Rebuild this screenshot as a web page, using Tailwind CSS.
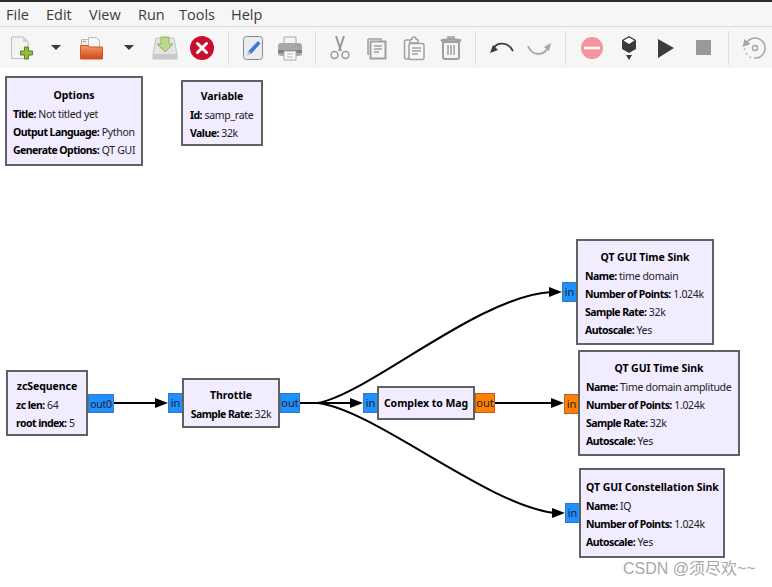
<!DOCTYPE html>
<html lang="en">
<head>
<meta charset="UTF-8">
<title>GNU Radio Companion</title>
<script src="https://cdn.jsdelivr.net/npm/@tailwindcss/browser@4"></script>
</head>
<body class="w-[772px] h-[587px] overflow-hidden bg-white font-['Noto_Sans',sans-serif] text-black">

<!-- Menu bar -->
<div class="h-[2px] bg-[#2c2c2c]"></div>
<nav class="h-[25px] flex items-center pl-[6px] pt-[2px] bg-[#f6f6f6] border-b border-[#dcdcdc] text-[14.5px] text-[#3c3c3c] font-['Open_Sans',sans-serif]">
  <span class="w-[40px]">File</span><span class="w-[43px]">Edit</span><span class="w-[49px]">View</span><span class="w-[41px]">Run</span><span class="w-[52px]">Tools</span><span>Help</span>
</nav>

<!-- Toolbar -->
<div class="h-[41px] flex items-center bg-[#f6f6f6] pl-[3px]">
  <div class="w-[36px] flex justify-center">
    <svg width="28" height="28" viewBox="0 0 28 28"><path d="M4.500 3h12l4.500 4.500V24.500H4.500z" fill="#f3f3f3" stroke="#bdbdbd"/><path d="M16 3v5h5z" fill="#cfcfcf"/><path d="M17.500 14.500h4v4h4v4h-4v4h-4v-4h-4v-4h4z" transform="translate(0 -1.500)" fill="#93bd3c" stroke="#5f7f22"/></svg>
  </div>
  <div class="w-[34px] flex justify-center"><div class="w-0 h-0 border-x-[5px] border-x-transparent border-t-[5px] border-t-[#3a3a3a]"></div></div>
  <div class="w-[39px] flex justify-center">
    <svg width="28" height="28" viewBox="0 0 28 28"><defs><linearGradient id="fo" x1="0" y1="0" x2="0" y2="1"><stop offset="0" stop-color="#f59a63"/><stop offset="1" stop-color="#d5461a"/></linearGradient></defs><path d="M3.500 5.500h13l3 3v6h-16z" fill="#f2f2f2" stroke="#bcbcbc"/><path d="M10.500 3.500h8l3 3v8h-11z" fill="#f7f7f7" stroke="#bcbcbc"/><path d="M5 7h3v1H5z" fill="#e08a4a"/><path d="M2.500 11.500h8l1 1.500h13v12h-22z" fill="url(#fo)" stroke="#c9572b"/></svg>
  </div>
  <div class="w-[34px] flex justify-center"><div class="w-0 h-0 border-x-[5px] border-x-transparent border-t-[5px] border-t-[#3a3a3a]"></div></div>
  <div class="w-[38px] flex justify-center">
    <svg width="28" height="28" viewBox="0 0 28 28"><path d="M5 4h18l3 16v5H2v-5z" fill="#e4e4e4" stroke="#c4c4c4"/><path d="M2 20h24v5H2z" fill="#c9c9c9"/><path d="M10 3h8v7h4l-8 8-8-8h4z" fill="#b9d98e" stroke="#8fb35f"/></svg>
  </div>
  <div class="w-[37px] flex justify-center">
    <svg width="26" height="26" viewBox="0 0 26 26"><circle cx="13" cy="13" r="12" fill="#c6102e"/><path d="M8.500 8.500l9 9M17.500 8.500l-9 9" stroke="#fff" stroke-width="3" stroke-linecap="round"/></svg>
  </div>
  <div class="w-px h-[34px] bg-[#dcdcdc] ml-[7px] mr-[6px]"></div>
  <div class="w-[37px] flex justify-center">
    <svg width="28" height="28" viewBox="0 0 28 28"><rect x="4.500" y="2.500" width="19" height="23" rx="3" fill="#e9edf2" stroke="#8a8a8a"/><path d="M19 7l2.500 2.500-9 10-4 1.500 1-4z" fill="#3c78d8"/><path d="M9.500 17l-1 4 3.500-1.500z" fill="#e8c08a"/></svg>
  </div>
  <div class="w-[37px] flex justify-center">
    <svg width="28" height="28" viewBox="0 0 28 28"><path d="M8 3h12v8H8z" fill="#f4f4f4" stroke="#a8a8a8"/><rect x="2" y="9" width="24" height="13" rx="3" fill="#a9a9a9"/><path d="M2 16h24v3H2z" fill="#7f7f7f"/><path d="M8 17h12v9H8z" fill="#fafafa" stroke="#a8a8a8"/><path d="M11 20h6M11 23h6" stroke="#b0b0b0"/><path d="M19 12h1M21 12h1M23 12h1" stroke="#d46a6a"/></svg>
  </div>
  <div class="w-px h-[34px] bg-[#dcdcdc] ml-[6px] mr-[6px]"></div>
  <div class="w-[37px] flex justify-center">
    <svg width="28" height="28" viewBox="0 0 28 28" fill="none" stroke="#9a9a9a" stroke-width="1.500"><path d="M10 2l5 15M18 2l-5 15" stroke-width="2"/><circle cx="8.500" cy="21" r="3.500"/><circle cx="19.500" cy="21" r="3.500"/></svg>
  </div>
  <div class="w-[37px] flex justify-center">
    <svg width="28" height="28" viewBox="0 0 28 28" fill="none" stroke="#a0a0a0" stroke-width="1.500"><path d="M5 5h13v2"/><path d="M5 5v15h1"/><rect x="7.500" y="7.500" width="15" height="17" fill="#f6f6f6" stroke-width="2"/><path d="M11 12h8M11 15h8M11 18h5"/></svg>
  </div>
  <div class="w-[37px] flex justify-center">
    <svg width="28" height="28" viewBox="0 0 28 28" fill="none" stroke="#a0a0a0" stroke-width="1.500"><path d="M9 6H6.500a2 2 0 0 0-2 2v15a2 2 0 0 0 2 2H10"/><path d="M10 6l2-1a2 2 0 0 1 4 0l2 1v3h-8z"/><rect x="9" y="9.500" width="15" height="16" rx="1.500" fill="#f6f6f6"/><path d="M12 14h9M12 17h9M12 20h6"/></svg>
  </div>
  <div class="w-[37px] flex justify-center">
    <svg width="28" height="28" viewBox="0 0 28 28" fill="none" stroke="#a0a0a0" stroke-width="1.500"><path d="M6 8h16v15a2 2 0 0 1-2 2H8a2 2 0 0 1-2-2z" stroke-width="2"/><path d="M4 7c2-2 18-2 20 0" stroke-width="2.500"/><path d="M11 3h6v2h-6z"/><path d="M11 11v10M14 11v10M17 11v10"/></svg>
  </div>
  <div class="w-px h-[34px] bg-[#dcdcdc] ml-[6px] mr-[7px]"></div>
  <div class="w-[37px] flex justify-center">
    <svg width="28" height="28" viewBox="0 0 28 28"><path d="M5.500 15C8 8 20 7 25 17" fill="none" stroke="#3c3c3c" stroke-width="1.800"/><path d="M2 19l3-8 5 5z" fill="#3c3c3c"/></svg>
  </div>
  <div class="w-[38px] flex justify-center">
    <svg width="28" height="28" viewBox="0 0 28 28"><path d="M3 12c4 10 15 10 19 3" fill="none" stroke="#a5a5a5" stroke-width="1.800"/><path d="M26 9l-2 8-5-4z" fill="#a5a5a5"/></svg>
  </div>
  <div class="w-px h-[34px] bg-[#dcdcdc] ml-[7px] mr-[7px]"></div>
  <div class="w-[37px] flex justify-center">
    <svg width="24" height="24" viewBox="0 0 24 24"><circle cx="12" cy="12" r="11" fill="#f7929f"/><path d="M4 12h16" stroke="#fff" stroke-width="2.500"/></svg>
  </div>
  <div class="w-[37px] flex justify-center">
    <svg width="28" height="28" viewBox="0 0 28 28"><path d="M14 2l7 4v9l-7 4-7-4V6z" fill="#3a3a3a"/><path d="M14 3.500l5.500 3-5.500 3.500-5.500-3.500z" fill="#fff"/><path d="M11 21h6l-3 5z" fill="#3a3a3a"/></svg>
  </div>
  <div class="w-[38px] flex justify-center">
    <svg width="28" height="28" viewBox="0 0 28 28"><path d="M6 5l16 9-16 10z" fill="#3c3c3c"/></svg>
  </div>
  <div class="w-[37px] flex justify-center">
    <div class="w-[15px] h-[15px] bg-[#999999]"></div>
  </div>
  <div class="w-px h-[34px] bg-[#dcdcdc] ml-[6px] mr-[6px]"></div>
  <div class="w-[37px] flex justify-center">
    <svg width="28" height="28" viewBox="0 0 28 28" fill="none" stroke="#a5a5a5" stroke-width="1.500"><path d="M6.500 9A10 10 0 1 1 14 24"/><path d="M11 23.500l-2-1M7 20.500l-1-1.500M4.500 16v-1.500" stroke-dasharray="1.500 1.500"/><path d="M2.500 13l2-8 6 5z" fill="#a5a5a5" stroke="none"/><circle cx="15" cy="14" r="2.500"/></svg>
  </div>
</div>

<!-- Flowgraph canvas: blocks are nodes on a free canvas -->
<main class="relative h-[519px] bg-white text-[10.5px] tracking-[-0.3px] leading-[18px] text-[#222] [&_b]:tracking-[-0.55px]">
  <svg class="absolute left-0 top-0" width="772" height="519" viewBox="0 68 772 519" fill="none" stroke="#000" stroke-width="2">
    <path d="M114 403H156"/>
    <path d="M300 403H350"/>
    <path d="M495 403H552"/>
    <path d="M318 403C370 393 480 295 552 292"/>
    <path d="M318 403C375 410 488 506 555 513"/>
    <g fill="#000" stroke="none">
      <path d="M155 398l13 5-13 5z"/>
      <path d="M350 398l13 5-13 5z"/>
      <path d="M551 398l13 5-13 5z"/>
      <path d="M549 287l13 5-13 5z"/>
      <path d="M552 508l13 5-13 5z"/>
    </g>
  </svg>

  <!-- Options -->
  <div class="absolute left-[5px] top-[8px] w-[138px] h-[90px] border-2 border-[#616161] bg-[#f1ecff] flex flex-col justify-center pl-[6px] pt-[3px]">
    <div class="font-bold tracking-[-0.05px] text-center text-black pr-[6px] mb-[1px]">Options</div>
    <div class="whitespace-nowrap"><b class="text-black">Title:</b> Not titled yet</div>
    <div class="whitespace-nowrap"><b class="text-black">Output Language:</b> Python</div>
    <div class="whitespace-nowrap"><b class="text-black">Generate Options:</b> QT GUI</div>
  </div>

  <!-- Variable -->
  <div class="absolute left-[181px] top-[12px] w-[82px] h-[66px] border-2 border-[#616161] bg-[#f1ecff] flex flex-col justify-center pl-[7px] pt-[3px]">
    <div class="font-bold tracking-[-0.05px] text-center text-black pr-[7px] mb-[1px]">Variable</div>
    <div class="whitespace-nowrap"><b class="text-black">Id:</b> samp_rate</div>
    <div class="whitespace-nowrap"><b class="text-black">Value:</b> 32k</div>
  </div>

  <!-- zcSequence -->
  <div class="absolute left-[6px] top-[302px] w-[82px] h-[66px] border-2 border-[#616161] bg-[#f1ecff] flex flex-col justify-center pl-[8px] pt-[3px]">
    <div class="font-bold tracking-[-0.05px] text-center text-black pr-[8px] mb-[1px]">zcSequence</div>
    <div class="whitespace-nowrap"><b class="text-black">zc len:</b> 64</div>
    <div class="whitespace-nowrap"><b class="text-black">root index:</b> 5</div>
  </div>
  <div class="absolute left-[88px] top-[326px] w-[26px] h-[19px] border border-[#3a78b8] bg-[#1e90ff] flex items-center justify-center">out0</div>

  <!-- Throttle -->
  <div class="absolute left-[168px] top-[325px] w-[15px] h-[20px] border border-[#3a78b8] bg-[#1e90ff] flex items-center justify-center text-[11px] tracking-normal">in</div>
  <div class="absolute left-[182px] top-[310px] w-[98px] h-[50px] border-2 border-[#616161] bg-[#f1ecff] flex flex-col justify-center items-center pt-[3px]">
    <div class="font-bold tracking-[-0.05px] text-black mb-[1px]">Throttle</div>
    <div class="whitespace-nowrap"><b class="text-black">Sample Rate:</b> 32k</div>
  </div>
  <div class="absolute left-[280px] top-[325px] w-[20px] h-[20px] border border-[#3a78b8] bg-[#1e90ff] flex items-center justify-center text-[11px] tracking-normal">out</div>

  <!-- Complex to Mag -->
  <div class="absolute left-[363px] top-[325px] w-[15px] h-[20px] border border-[#3a78b8] bg-[#1e90ff] flex items-center justify-center text-[11px] tracking-normal">in</div>
  <div class="absolute left-[377px] top-[318px] w-[98px] h-[34px] border-2 border-[#616161] bg-[#f1ecff] flex items-center justify-center">
    <div class="font-bold tracking-[-0.05px] text-black">Complex to Mag</div>
  </div>
  <div class="absolute left-[475px] top-[325px] w-[20px] h-[20px] border border-[#b8602e] bg-[#ff8000] flex items-center justify-center text-[11px] tracking-normal">out</div>

  <!-- QT GUI Time Sink -->
  <div class="absolute left-[562px] top-[214px] w-[15px] h-[20px] border border-[#3a78b8] bg-[#1e90ff] flex items-center justify-center text-[11px] tracking-normal">in</div>
  <div class="absolute left-[576px] top-[171px] w-[138px] h-[106px] border-2 border-[#616161] bg-[#f1ecff] flex flex-col justify-center pl-[7px] pt-[3px]">
    <div class="font-bold tracking-[-0.05px] text-center text-black pr-[7px] mb-[1px]">QT GUI Time Sink</div>
    <div class="whitespace-nowrap"><b class="text-black">Name:</b> time domain</div>
    <div class="whitespace-nowrap"><b class="text-black">Number of Points:</b> 1.024k</div>
    <div class="whitespace-nowrap"><b class="text-black">Sample Rate:</b> 32k</div>
    <div class="whitespace-nowrap"><b class="text-black">Autoscale:</b> Yes</div>
  </div>

  <!-- QT GUI Time Sink, amplitude -->
  <div class="absolute left-[564px] top-[326px] w-[15px] h-[20px] border border-[#b8602e] bg-[#ff8000] flex items-center justify-center text-[11px] tracking-normal">in</div>
  <div class="absolute left-[578px] top-[282px] w-[162px] h-[106px] border-2 border-[#616161] bg-[#f1ecff] flex flex-col justify-center pl-[6px] pt-[3px]">
    <div class="font-bold tracking-[-0.05px] text-center text-black pr-[6px] mb-[1px]">QT GUI Time Sink</div>
    <div class="whitespace-nowrap"><b class="text-black">Name:</b> Time domain amplitude</div>
    <div class="whitespace-nowrap"><b class="text-black">Number of Points:</b> 1.024k</div>
    <div class="whitespace-nowrap"><b class="text-black">Sample Rate:</b> 32k</div>
    <div class="whitespace-nowrap"><b class="text-black">Autoscale:</b> Yes</div>
  </div>

  <!-- QT GUI Constellation Sink -->
  <div class="absolute left-[565px] top-[435px] w-[15px] h-[20px] border border-[#3a78b8] bg-[#1e90ff] flex items-center justify-center text-[11px] tracking-normal">in</div>
  <div class="absolute left-[579px] top-[400px] w-[146px] h-[90px] border-2 border-[#616161] bg-[#f1ecff] flex flex-col justify-center pl-[5px] pt-[3px]">
    <div class="font-bold tracking-[-0.05px] text-center text-black pr-[5px] mb-[1px] whitespace-nowrap">QT GUI Constellation Sink</div>
    <div class="whitespace-nowrap"><b class="text-black">Name:</b> IQ</div>
    <div class="whitespace-nowrap"><b class="text-black">Number of Points:</b> 1.024k</div>
    <div class="whitespace-nowrap"><b class="text-black">Autoscale:</b> Yes</div>
  </div>

  <!-- Watermark -->
  <div class="absolute left-[623px] top-[490px] text-[16px] tracking-normal leading-[22px] text-[#a8a8a8] whitespace-nowrap font-['Liberation_Sans','Noto_Sans_CJK_SC',sans-serif]">CSDN @须尽欢~~</div>
</main>

</body>
</html>
